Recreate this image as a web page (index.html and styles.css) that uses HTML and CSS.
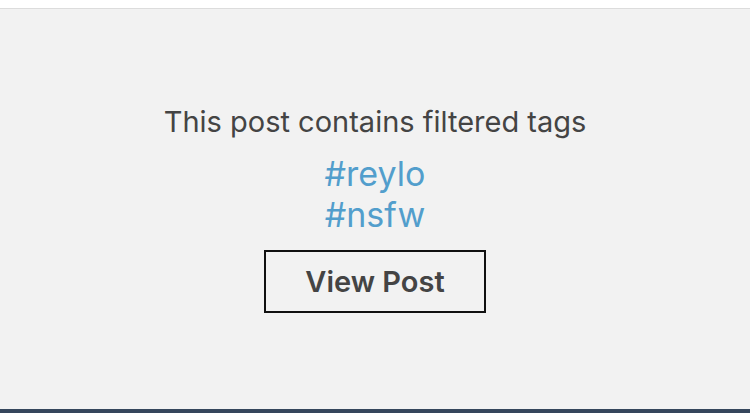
FILE: index.html
```html
<!DOCTYPE html>
<html>
<head>
<meta charset="utf-8">
<link rel="stylesheet" href="styles.css">
</head>
<body>
<div class="top"></div>
<main class="post">
  <p class="msg">This post contains filtered tags</p>
  <div class="tags">
    <a class="tag">#reylo</a>
    <a class="tag">#nsfw</a>
  </div>
  <button class="view">View Post</button>
</main>
<div class="bar"></div>
</body>
</html>
```
FILE: styles.css
```css
html, body {
  margin: 0;
  padding: 0;
  height: 413px;
  overflow: hidden;
}
body {
  display: flex;
  flex-direction: column;
  font-family: Inter, "Liberation Sans", sans-serif;
  background: #f2f2f2;
}
.top {
  height: 8px;
  background: #fff;
  border-bottom: 1px solid #dcdcdc;
  flex: none;
}
.post {
  flex: 1;
  display: flex;
  flex-direction: column;
  align-items: center;
  padding-top: 96px;
  background: #f2f2f2;
}
.msg {
  margin: 0;
  font-size: 29px;
  color: #444;
  line-height: 34px;
}
.tags {
  display: flex;
  flex-direction: column;
  align-items: center;
  margin-top: 14px;
}
.tag {
  font-size: 34px;
  line-height: 41px;
  color: #529ecc;
}
.view {
  margin-top: 15px;
  width: 222px;
  height: 63px;
  box-sizing: border-box;
  border: 2px solid #111;
  background: transparent;
  font-family: Inter, "Liberation Sans", sans-serif;
  font-weight: 600;
  font-size: 29px;
  color: #444;
  padding: 0;
}
.bar {
  height: 4px;
  background: #35465c;
  flex: none;
}
```
